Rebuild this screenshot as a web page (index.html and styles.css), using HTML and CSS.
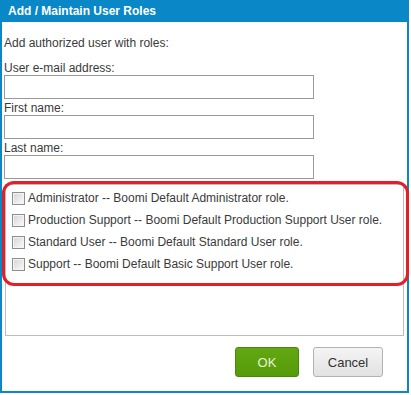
FILE: index.html
```html
<!DOCTYPE html>
<html>
<head>
<meta charset="utf-8">
<link rel="stylesheet" href="styles.css">
</head>
<body>
<div class="dialog">
  <div class="title">Add / Maintain User Roles</div>
  <div class="content">
    <div class="intro">Add authorized user with roles:</div>
    <label class="label">User e-mail address:</label>
    <input class="field" type="text">
    <label class="label">First name:</label>
    <input class="field" type="text">
    <label class="label">Last name:</label>
    <input class="field" type="text">
    <div class="roles">
      <label class="role"><input type="checkbox" class="cb"><span>Administrator -- Boomi Default Administrator role.</span></label>
      <label class="role"><input type="checkbox" class="cb"><span>Production Support -- Boomi Default Production Support User role.</span></label>
      <label class="role"><input type="checkbox" class="cb"><span>Standard User -- Boomi Default Standard User role.</span></label>
      <label class="role"><input type="checkbox" class="cb"><span>Support -- Boomi Default Basic Support User role.</span></label>
    </div>
    <div class="buttons">
      <button class="btn ok">OK</button>
      <button class="btn cancel">Cancel</button>
    </div>
  </div>
  <div class="highlight"></div>
</div>
</body>
</html>
```
FILE: styles.css
```css
html, body {
  margin: 0;
  padding: 0;
  background: #ffffff;
}
body {
  font-family: "Liberation Sans", Arial, sans-serif;
  font-size: 12px;
  color: #3a3a3a;
}
.dialog {
  position: relative;
  width: 409px;
  height: 393px;
  box-sizing: border-box;
  border: 2px solid #0a87c6;
  border-top: 0;
  display: flex;
  flex-direction: column;
  background: #ffffff;
}
.title {
  height: 22px;
  line-height: 22px;
  margin: 0 -2px;
  padding-left: 8px;
  background: #0a87c6;
  color: #ffffff;
  font-weight: bold;
  font-size: 12px;
}
.content {
  padding: 0 3px 0 2px;
  display: flex;
  flex-direction: column;
}
.intro {
  margin-top: 14px;
  line-height: 14px;
  height: 14px;
  margin-bottom: 11px;
}
.label {
  display: block;
  line-height: 14px;
  height: 14px;
  margin-top: 2px;
}
.label:first-of-type {
  margin-top: 0;
}
.field {
  display: block;
  width: 310px;
  height: 24px;
  box-sizing: border-box;
  margin: 0;
  border: 1px solid #9a9a9a;
  background: #ffffff;
  padding: 2px 4px;
  font: inherit;
}
.roles {
  margin-top: 5px;
  margin-left: 1px;
  height: 152px;
  box-sizing: border-box;
  border: 1px solid #bcbcbc;
  padding: 2px 0 0 6px;
  display: flex;
  flex-direction: column;
}
.role {
  display: flex;
  align-items: center;
  height: 22px;
  white-space: nowrap;
}
.cb {
  -webkit-appearance: none;
  appearance: none;
  width: 13px;
  height: 13px;
  margin: 0 3px 0 0;
  border: 1px solid #8e8e8e;
  background: linear-gradient(135deg, #d4d4d4 0%, #f0f0f0 70%, #fbfbfb 100%);
  box-sizing: border-box;
  box-shadow: inset 0 0 0 1px #f4f4f4;
}
.buttons {
  display: flex;
  justify-content: flex-end;
  gap: 14px;
  margin-top: 11px;
  padding-right: 21px;
}
.btn {
  height: 30px;
  box-sizing: border-box;
  border-radius: 3px;
  font-family: "Liberation Sans", Arial, sans-serif;
  font-size: 13px;
  padding: 0;
  margin: 0;
}
.ok {
  width: 64px;
  background: linear-gradient(#62a812, #569b0a);
  border: 1px solid #4a860b;
  color: #e9f2d6;
}
.cancel {
  width: 70px;
  background: linear-gradient(#f4f4f4, #e2e2e2);
  border: 1px solid #b2b2b2;
  color: #333333;
}
.highlight {
  position: absolute;
  left: 0;
  top: 181px;
  width: 407px;
  height: 105px;
  box-sizing: border-box;
  border: 3px solid #e51f28;
  border-radius: 12px;
  pointer-events: none;
}
```
